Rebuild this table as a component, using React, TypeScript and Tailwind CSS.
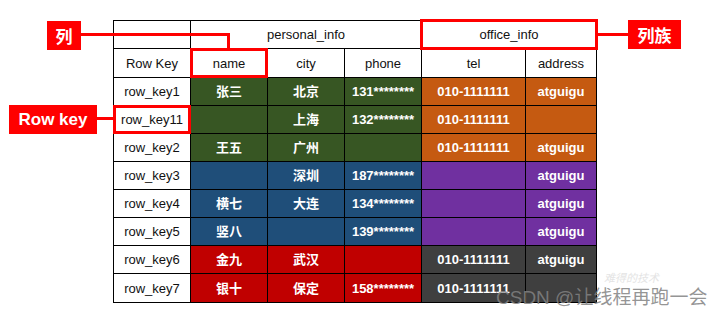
import React from "react";

const G = "bg-[#375623]";
const O = "bg-[#c55a11]";
const B = "bg-[#1f4e79]";
const P = "bg-[#7030a0]";
const R = "bg-[#c00000]";
const D = "bg-[#3f3f3f]";

type Row = { key: string; cells: string[]; left: string; right: string; highlight?: boolean };

const rows: Row[] = [
  { key: "row_key1", cells: ["张三", "北京", "131********", "010-1111111", "atguigu"], left: G, right: O },
  { key: "row_key11", cells: ["", "上海", "132********", "010-1111111", ""], left: G, right: O, highlight: true },
  { key: "row_key2", cells: ["王五", "广州", "", "010-1111111", "atguigu"], left: G, right: O },
  { key: "row_key3", cells: ["", "深圳", "187********", "", "atguigu"], left: B, right: P },
  { key: "row_key4", cells: ["横七", "大连", "134********", "", "atguigu"], left: B, right: P },
  { key: "row_key5", cells: ["竖八", "", "139********", "", "atguigu"], left: B, right: P },
  { key: "row_key6", cells: ["金九", "武汉", "", "010-1111111", "atguigu"], left: R, right: D },
  { key: "row_key7", cells: ["银十", "保定", "158********", "010-1111111", ""], left: R, right: D },
];

const cellBase = "flex items-center justify-center text-[13px] leading-none";
const dataCell = `${cellBase} text-white font-bold font-['Liberation_Sans','Noto_Sans_CJK_SC',sans-serif]`;
const headCell = `${cellBase} bg-white text-[#111]`;

export default function App() {
  return (
    <div className="relative w-[724px] h-[317px] bg-white overflow-hidden font-['Liberation_Sans','Noto_Sans_CJK_SC',sans-serif]">
      <div className="pt-[20px] pl-[113px]">
        <div className="grid w-max grid-cols-[76px_76px_76px_76px_103px_70px] grid-rows-[27px_28px_27px_27px_27px_27px_27px_27px_27px_28px] gap-px bg-black p-px">
          {/* header row 1 */}
          <div className={headCell}></div>
          <div className={`${headCell} col-span-3`}>personal_info</div>
          <div className={`${headCell} col-span-2 relative`}>
            office_info
            <div className="absolute -inset-[2px] border-[3px] border-[#ff0000] z-10"></div>
          </div>
          {/* header row 2 */}
          <div className={headCell}>Row Key</div>
          <div className={`${headCell} relative`}>
            name
            <div className="absolute -inset-px border-[3px] border-[#ff0000] z-10"></div>
          </div>
          <div className={headCell}>city</div>
          <div className={headCell}>phone</div>
          <div className={headCell}>tel</div>
          <div className={headCell}>address</div>
          {rows.map((r) => (
            <React.Fragment key={r.key}>
              <div className={`${headCell} relative`}>
                {r.key}
                {r.highlight && (
                  <div className="absolute -inset-px border-[3px] border-[#ff0000] z-10"></div>
                )}
              </div>
              {r.cells.map((c, i) => (
                <div key={i} className={`${dataCell} ${i < 3 ? r.left : r.right}`}>
                  {c}
                </div>
              ))}
            </React.Fragment>
          ))}
        </div>
      </div>

      {/* callout: 列 */}
      <div className="absolute left-[47px] top-[21px] w-[34px] h-[29px] bg-[#ff0000] text-white font-bold text-[17px] flex items-center justify-center font-['Noto_Sans_CJK_SC',sans-serif]">
        列
      </div>
      <div className="absolute left-[81px] top-[33px] w-[149px] h-[3px] bg-[#ff0000]"></div>
      <div className="absolute left-[227px] top-[33px] w-[3px] h-[17px] bg-[#ff0000]"></div>

      {/* callout: Row key */}
      <div className="absolute left-[9px] top-[105px] w-[88px] h-[29px] bg-[#ff0000] text-white font-bold text-[17px] flex items-center justify-center">
        Row key
      </div>
      <div className="absolute left-[97px] top-[117px] w-[17px] h-[3px] bg-[#ff0000]"></div>

      {/* callout: 列族 */}
      <div className="absolute left-[628px] top-[20px] w-[53px] h-[29px] bg-[#ff0000] text-white font-bold text-[17px] flex items-center justify-center font-['Noto_Sans_CJK_SC',sans-serif]">
        列族
      </div>
      <div className="absolute left-[597px] top-[33px] w-[31px] h-[3px] bg-[#ff0000]"></div>

      {/* watermark */}
      <div className="absolute left-[604px] top-[272px] text-[11px] italic leading-none text-[#e4e4e4] font-['Noto_Sans_CJK_SC',serif]">
        难得的技术
      </div>
      <div className="absolute left-[496px] top-[288px] text-[19px] leading-none text-[rgba(130,130,130,0.85)] whitespace-nowrap font-['Liberation_Sans','Noto_Sans_CJK_SC',sans-serif]">
        CSDN @让线程再跑一会
      </div>
    </div>
  );
}
